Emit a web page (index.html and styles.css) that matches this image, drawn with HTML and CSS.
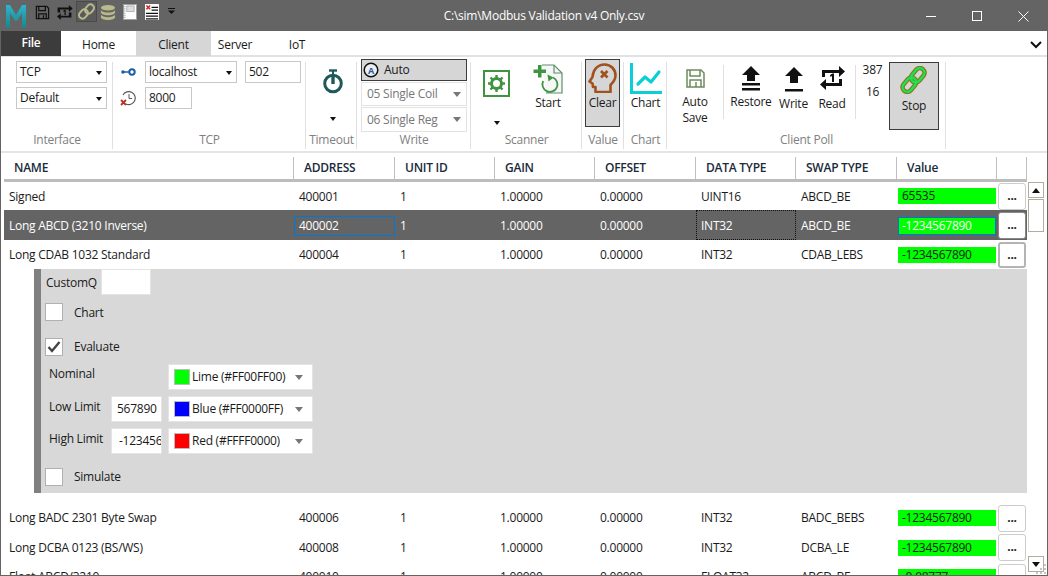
FILE: index.html
```html
<!DOCTYPE html>
<html lang="en">
<head>
<meta charset="utf-8">
<title>Modbus Validation</title>
<link rel="stylesheet" href="styles.css">
</head>
<body>
<div class="window">
  <header class="titlebar">
    <div class="qat">
      <svg class="logo" width="20" height="23" viewBox="0 0 20 23"><defs><linearGradient id="mg" x1="0" y1="0" x2="0" y2="1"><stop offset="0" stop-color="#2cb4cc"/><stop offset="1" stop-color="#1c858e"/></linearGradient></defs><path d="M0 23V0h4l6 10 6-10h4v23h-4V8l-5 8h-2L4 8v15z" fill="url(#mg)"/></svg>
      <svg class="q1" width="15" height="15" viewBox="0 0 16 16" fill="none" stroke="#111" stroke-width="1.300"><path d="M1.500 1.500h11l2 2v11h-13z"/><path d="M4 1.500v4.500h7v-4.500M4 14.500v-5h8v5M9 11v3.500"/></svg>
      <svg class="q2" width="17" height="15" viewBox="0 0 26 24"><path d="M2 12V4h18V0l6 5.500L20 11V7H6v5zM24 12v8H7v4L1 18.500 7 13v4h13v-5z" fill="#111"/><path d="M11 9l2.500-1.500H15V16h-2v-6l-1.500 1z" fill="#111"/></svg>
      <span class="qsel"><svg width="17" height="17" viewBox="0 0 17 17" fill="none" stroke="#b9b98c" stroke-width="2"><rect x="8" y="1" width="7" height="10" rx="3.500" transform="rotate(40 11.500 6)"/><rect x="2" y="6" width="7" height="10" rx="3.500" transform="rotate(40 5.500 11)"/></svg></span>
      <svg class="q3" width="16" height="17" viewBox="0 0 17 17"><ellipse cx="8.500" cy="3.500" rx="7.500" ry="3" fill="#b9b98c"/><path d="M1 6v2.500c0 1.700 3.400 3 7.500 3s7.500-1.300 7.500-3V6c-1 1.700-4 2.500-7.500 2.500S2 7.700 1 6zM1 11v2.500c0 1.700 3.400 3 7.500 3s7.500-1.300 7.500-3V11c-1 1.700-4 2.500-7.500 2.500S2 12.700 1 11z" fill="#b9b98c"/></svg>
      <svg class="q4" width="14" height="16" viewBox="0 0 15 17"><rect width="15" height="17" fill="#fff"/><rect x=".5" y=".5" width="14" height="16" fill="none" stroke="#999"/><path d="M4 2h8v6H4z" fill="#ddd" stroke="#888" stroke-width=".6"/><path d="M2 2v13" stroke="#777" stroke-dasharray="1 1"/></svg>
      <svg class="q5" width="14" height="16" viewBox="0 0 15 17"><rect width="15" height="17" fill="#fff"/><path d="M7 3.500h7M7 6.500h7M1 10h13M1 13h13M1 15.800h13" stroke="#111" stroke-width="1.400"/><path d="M1.500 1.500l4 4M5.500 1.500l-4 4" stroke="#c8281e" stroke-width="1.600"/></svg>
      <svg class="q6" width="9" height="8" viewBox="0 0 9 8"><path d="M1 1h7v1H1zM1 3.500h7L4.500 7z" fill="#111"/></svg>
    </div>
    <div class="doc-title">C:\sim\Modbus Validation v4 Only.csv</div>
    <div class="winbtns">
      <svg width="11" height="11" viewBox="0 0 11 11"><path d="M0 5.500h10" stroke="#fff"/></svg>
      <svg width="11" height="11" viewBox="0 0 11 11"><rect x=".5" y=".5" width="9" height="9" fill="none" stroke="#fff"/></svg>
      <svg width="11" height="11" viewBox="0 0 11 11"><path d="M.5.500l10 10M10.500.500l-10 10" stroke="#fff"/></svg>
    </div>
  </header>

  <nav class="tabs">
    <div class="tab tab-file">File</div>
    <div class="tab">Home</div>
    <div class="tab tab-active">Client</div>
    <div class="tab tab-server">Server</div>
    <div class="tab tab-iot">IoT</div>
    <svg class="chev" width="14" height="9" viewBox="0 0 14 9"><path d="M2 2l5 5 5-5" fill="none" stroke="#111" stroke-width="2"/></svg>
  </nav>

  <section class="ribbon">
    <div class="group g-interface">
      <div class="gbody col-stack">
        <div class="sel w91">TCP<i class="caret"></i></div>
        <div class="sel w91">Default<i class="caret"></i></div>
      </div>
      <div class="glabel">Interface</div>
    </div>
    <div class="group g-tcp">
      <div class="gbody tcp-grid">
        <svg width="16" height="8" viewBox="0 0 16 8"><circle cx="3" cy="4" r="1.800" fill="#1b5fa8"/><path d="M3 4h7" stroke="#1b5fa8" stroke-width="1.500"/><circle cx="12" cy="4" r="2.700" fill="none" stroke="#1b5fa8" stroke-width="2"/></svg>
        <div class="sel w92">localhost<i class="caret"></i></div>
        <div class="inp w56">502</div>
        <svg width="16" height="16" viewBox="0 0 16 16"><path d="M3 5a6.500 6.500 0 1 1 3 9" fill="none" stroke="#555" stroke-width="1.100"/><path d="M9 4v4.500H12" fill="none" stroke="#555"/><path d="M1 10l5 5M6 10l-5 5" stroke="#b83020" stroke-width="1.800"/></svg>
        <div class="inp w47">8000</div>
      </div>
      <div class="glabel">TCP</div>
    </div>
    <div class="group g-timeout">
      <div class="gbody bigbody">
        <svg class="timer" width="20" height="25" viewBox="0 0 20 25" fill="none"><path d="M6 1.500h8" stroke="#1f5a5a" stroke-width="2.400"/><path d="M10 2v3" stroke="#1f5a5a" stroke-width="2"/><circle cx="10" cy="14.500" r="8.300" stroke="#1f5a5a" stroke-width="3"/><path d="M10 6v9" stroke="#1f5a5a" stroke-width="3.400"/></svg>
        <i class="caret caret-big"></i>
      </div>
      <div class="glabel">Timeout</div>
    </div>
    <div class="group g-write">
      <div class="gbody write-stack">
        <div class="auto"><svg width="16" height="16" viewBox="0 0 16 16"><circle cx="8" cy="8" r="6.800" fill="#eee" stroke="#111" stroke-width="1.500"/><text x="8" y="11.500" class="a-glyph">A</text></svg><span>Auto</span></div>
        <div class="wsel">05 Single Coil<i class="caret caret-gray"></i></div>
        <div class="wsel">06 Single Reg<i class="caret caret-gray"></i></div>
      </div>
      <div class="glabel">Write</div>
    </div>
    <div class="group g-scanner">
      <div class="gbody scanner-body">
        <div class="gearcol">
          <svg width="27" height="27" viewBox="0 0 27 27"><rect width="27" height="27" fill="#f0f0f0"/><rect x="1" y="1" width="25" height="25" fill="#fff" stroke="#3f9440" stroke-width="2"/><circle cx="13.500" cy="13.500" r="5" fill="none" stroke="#3f9440" stroke-width="3"/><path d="M13.500 5v17M5 13.500h17M7.500 7.500l12 12M19.500 7.500l-12 12" stroke="#3f9440" stroke-width="2.400" stroke-dasharray="3 11"/></svg>
          <i class="caret caret-big"></i>
        </div>
        <div class="startcol">
          <svg width="30" height="30" viewBox="0 0 30 30" fill="none"><path d="M9 1h12l8 8v20H13" fill="#f6f6f6" stroke="#5f8f6a" stroke-width="1.200"/><path d="M21 1v8h8" stroke="#5f8f6a" stroke-width="1.200"/><path d="M5 1h3.500v4.500H13V9H8.500v4.500H5V9H.500V5.500H5z" fill="#3f9440"/><path d="M20 13.500a7.500 7.500 0 1 1-9.800 3.500" stroke="#3f9440" stroke-width="1.800"/><path d="M14.500 10.500l6 3-5 4z" fill="#3f9440"/></svg>
          <span>Start</span>
        </div>
      </div>
      <div class="glabel">Scanner</div>
    </div>
    <div class="group g-value">
      <div class="gbody clearbody">
        <div class="clearbtn">
          <svg width="29" height="30" viewBox="0 0 29 30" fill="none"><path d="M7.500 29v-5H5l-.5-3.500-3-2L4.500 14C5 6.500 10 1.500 16.500 1.500 23 1.500 27.500 6.500 27.500 12.500c0 4-2.500 7-5 9.500v7z" stroke="#a0521e" stroke-width="2.600" stroke-linejoin="round"/><path d="M13 8l6.500 6.500M19.500 8L13 14.500" stroke="#a0521e" stroke-width="2.800"/></svg>
          <span>Clear</span>
        </div>
      </div>
      <div class="glabel">Value</div>
    </div>
    <div class="group g-chart">
      <div class="gbody chartbody">
        <svg width="32" height="31" viewBox="0 0 32 31" fill="none"><path d="M1.500 0v29.500H32" stroke="#0ccfd6" stroke-width="3"/><path d="M8 21l7-7 6 5 8-10" stroke="#0ccfd6" stroke-width="3.200" stroke-linecap="round" stroke-linejoin="round"/></svg>
        <span>Chart</span>
      </div>
      <div class="glabel">Chart</div>
    </div>
    <div class="group g-poll">
      <div class="gbody pollbody">
        <div class="autosave">
          <svg width="19" height="19" viewBox="0 0 19 19" fill="none" stroke="#6f8a5c" stroke-width="1.500"><path d="M1 1h14l3 3v14H1z"/><path d="M4 1v6h10V1M4 18v-7h11v7M10 13v5"/></svg>
          <span>Auto<br>Save</span>
        </div>
        <div class="pollbtn restore">
          <svg width="20" height="27" viewBox="0 0 20 27"><path d="M10 1l9 9h-5v6H6v-6H1z" fill="#111"/><path d="M1 18h18v2.500H1zM1 23h18v2.500H1z" fill="#111"/></svg>
          <span>Restore</span>
        </div>
        <div class="pollbtn write">
          <svg width="20" height="27" viewBox="0 0 20 27"><path d="M10 2l9 9h-5v7H6v-7H1z" fill="#111"/><path d="M1 24h18v2.500H1z" fill="#111"/></svg>
          <span>Write</span>
        </div>
        <div class="pollbtn read">
          <svg width="26" height="27" viewBox="0 0 26 27"><path d="M3 12V5h17V1l6 5.500-6 5.500V8H6v4zM23 14v7H7v4l-6-5.500L7 14v4h13v-4z" fill="#111"/><path d="M11 10l2.500-1.500H15V17h-2v-6l-1.500 1z" fill="#111"/></svg>
          <span>Read</span>
        </div>
        <div class="counts"><span>387</span><span>16</span></div>
        <div class="stopbtn">
          <svg width="28" height="28" viewBox="0 0 30 30" fill="none"><g stroke="#8a7a14" stroke-width="5"><rect x="14" y="1.500" width="10" height="17" rx="5" transform="rotate(40 19 10)"/><rect x="5" y="11.500" width="10" height="17" rx="5" transform="rotate(40 10 20)"/></g><g stroke="#14e65a" stroke-width="2.400"><rect x="14" y="1.500" width="10" height="17" rx="5" transform="rotate(40 19 10)"/><rect x="5" y="11.500" width="10" height="17" rx="5" transform="rotate(40 10 20)"/></g></svg>
          <span>Stop</span>
        </div>
      </div>
      <div class="glabel">Client Poll</div>
    </div>
  </section>

  <main class="main">
    <div class="table">
      <div class="thead cols">
        <div>NAME</div><div>ADDRESS</div><div>UNIT ID</div><div>GAIN</div><div>OFFSET</div><div>DATA TYPE</div><div>SWAP TYPE</div><div>Value</div><div></div>
      </div>
      <div class="row cols h28 nudge">
        <div>Signed</div><div>400001</div><div>1</div><div>1.00000</div><div>0.00000</div><div>UINT16</div><div>ABCD_BE</div><div class="val">65535</div><div class="dots">...</div>
      </div>
      <div class="row cols h30 selected nudge">
        <div>Long ABCD (3210 Inverse)</div><div class="focus-blue">400002</div><div>1</div><div>1.00000</div><div>0.00000</div><div class="focus-dot">INT32</div><div>ABCD_BE</div><div class="val val-sel">-1234567890</div><div class="dots">...</div>
      </div>
      <div class="row cols h29">
        <div>Long CDAB 1032 Standard</div><div>400004</div><div>1</div><div>1.00000</div><div>0.00000</div><div>INT32</div><div>CDAB_LEBS</div><div class="val">-1234567890</div><div class="dots dots-open">...</div>
      </div>
      <div class="detail">
        <div class="customq"><span>CustomQ</span><div class="inp-plain"></div></div>
        <div class="check chk-chart"><i class="box"></i><span>Chart</span></div>
        <div class="check chk-eval"><i class="box"><svg width="14" height="12" viewBox="0 0 14 12"><path d="M1.500 6l3.500 4 7.500-9" fill="none" stroke="#444" stroke-width="2.400"/></svg></i><span>Evaluate</span></div>
        <div class="limits">
          <span class="lim-nominal">Nominal</span><span></span>
          <div class="combo"><i class="swatch lime"></i><span>Lime (#FF00FF00)</span><i class="caret caret-gray"></i></div>
          <span>Low Limit</span><div class="limit-inp">567890</div>
          <div class="combo"><i class="swatch blue"></i><span>Blue (#FF0000FF)</span><i class="caret caret-gray"></i></div>
          <span>High Limit</span><div class="limit-inp clip"><b>-1234567890</b></div>
          <div class="combo"><i class="swatch red"></i><span>Red (#FFFF0000)</span><i class="caret caret-gray"></i></div>
        </div>
        <div class="check chk-sim"><i class="box"></i><span>Simulate</span></div>
      </div>
      <div class="row cols h30 after">
        <div>Long BADC 2301 Byte Swap</div><div>400006</div><div>1</div><div>1.00000</div><div>0.00000</div><div>INT32</div><div>BADC_BEBS</div><div class="val">-1234567890</div><div class="dots">...</div>
      </div>
      <div class="row cols h29">
        <div>Long DCBA 0123 (BS/WS)</div><div>400008</div><div>1</div><div>1.00000</div><div>0.00000</div><div>INT32</div><div>DCBA_LE</div><div class="val">-1234567890</div><div class="dots">...</div>
      </div>
      <div class="row cols h30">
        <div>Float ABCD/3210</div><div>400010</div><div>1</div><div>1.00000</div><div>0.00000</div><div>FLOAT32</div><div>ABCD_BE</div><div class="val">-0.98777</div><div class="dots">...</div>
      </div>
    </div>
    <aside class="scrollbar">
      <div class="sb-btn"><i class="tri-up"></i></div>
      <div class="sb-thumb"></div>
      <div class="sb-track"></div>
      <div class="sb-btn"><i class="tri-down"></i></div>
    </aside>
  </main>
  <svg class="grip" width="11" height="11" viewBox="0 0 11 11" fill="#c4c4c4"><path d="M8 0h2v2H8zM4 4h2v2H4zM8 4h2v2H8zM0 8h2v2H0zM4 8h2v2H4zM8 8h2v2H8z"/></svg>
</div>
</body>
</html>
```
FILE: styles.css
```css
* { box-sizing: border-box; }
html, body { margin: 0; height: 100%; overflow: hidden; }
body { font: 12px/16px "Open Sans", "Noto Sans", sans-serif; color: #1a1a1a; background: #fff; letter-spacing: -0.25px; }
i { display: block; font-style: normal; }
svg { display: block; flex: none; }

.window { width: 1048px; height: 576px; border: solid #646464; border-width: 0 1px 1px; overflow: hidden; display: flex; flex-direction: column; position: relative; }
.grip { position: absolute; right: 0; bottom: 0; }

/* title bar */
.titlebar { height: 31px; flex: none; background: #646464; color: #fff; display: grid; grid-template-columns: 1fr 1fr; position: relative; }
.qat { display: flex; align-items: flex-start; padding: 5px 0 0 5px; }
.q1 { margin: 0 0 0 9px; }
.q2 { margin: 0 0 0 6px; }
.qsel { width: 21px; height: 21px; margin: -4px 0 0 3px; background: #5a5a5a; border: 1px solid #4a4a4a; display: flex; align-items: center; justify-content: center; }
.q3 { margin: -1px 0 0 3px; }
.q4 { margin: -1px 0 0 7px; }
.q5 { margin: -1px 0 0 8px; }
.q6 { margin: 2px 0 0 8px; }
.doc-title { position: absolute; left: 40px; right: 0; top: 8px; text-align: center; }
.winbtns { grid-column: 2; display: flex; justify-content: flex-end; gap: 35px; padding: 11px 18px 0 0; }

/* tabs */
.tabs { height: 26px; flex: none; display: flex; border-bottom: 2px solid #e2e2e2; position: relative; }
.tab { width: 75px; height: 25px; text-align: center; line-height: 27px; }
.tab-file { width: 60px; background: #3c3c3c; color: #fff; font-weight: 600; line-height: 24px; }
.tab-active { background: #d6d6d6; }
.tab-server { width: 48px; }
.tab-iot { margin-left: 26px; width: 24px; }
.chev { position: absolute; right: 4px; top: 9px; }

/* ribbon */
.ribbon { height: 96px; flex: none; display: flex; border-bottom: 2px solid #e4e4e4; }
.group { display: flex; flex-direction: column; height: 94px; position: relative; }
.group::after { content: ""; position: absolute; right: 0; top: 5px; bottom: 2px; width: 1px; background: #e0e0e0; }
.gbody { flex: 1; min-height: 0; }
.glabel { height: 17px; text-align: center; color: #808080; line-height: 16px; margin-bottom: 2px; }
.g-interface { width: 112px; }
.g-tcp { width: 193px; }
.g-timeout { width: 51px; }
.g-write { width: 114px; }
.g-scanner { width: 111px; }
.g-value { width: 42px; }
.g-chart { width: 43px; }
.g-poll { width: 279px; }

.sel, .inp { height: 22px; border: 1px solid #c8c8c8; line-height: 19px; padding-left: 3px; position: relative; background: #fff; }
.w91 { width: 91px; }
.w92 { width: 92px; }
.w56 { width: 56px; }
.w47 { width: 47px; }
.caret { width: 0; height: 0; border: 3px solid transparent; border-top: 4px solid #111; border-bottom: 0; }
.sel .caret { position: absolute; right: 4px; top: 9px; }
.caret-big { border-width: 4px 3.500px 0; }
.caret-gray { border-width: 5px 4px 0; border-top-color: #777; }

.col-stack { display: flex; flex-direction: column; gap: 4px; padding: 4px 0 0 15px; }
.tcp-grid { display: grid; grid-template-columns: 16px 92px 56px; grid-auto-rows: 22px; column-gap: 8px; row-gap: 4px; padding: 4px 0 0 7px; align-items: center; align-content: start; justify-items: start; }
.tcp-grid .w56 { margin-left: 1px; }
.tcp-grid .w92, .tcp-grid .w47 { margin-left: 1px; }
.bigbody { display: flex; flex-direction: column; align-items: center; padding: 12px 0 0 2px; }
.timer { margin-bottom: 23px; }

.write-stack { padding: 2px 0 0 4px; display: flex; flex-direction: column; gap: 1px; }
.auto { width: 106px; height: 22px; background: #d6d6d6; border: 1px solid #3c3c3c; display: flex; align-items: center; gap: 5px; padding-left: 1px; }
.a-glyph { font: bold 9px "Open Sans", sans-serif; fill: #1b5fa8; text-anchor: middle; }
.wsel { width: 106px; height: 25px; border: 1px solid #e2e2e2; color: #777; display: flex; align-items: center; justify-content: space-between; padding: 0 5px 0 5px; }

.scanner-body { display: flex; padding: 7px 0 0 12px; }
.gearcol { width: 27px; display: flex; flex-direction: column; align-items: center; padding-top: 6px; }
.gearcol .caret { margin-top: 24px; }
.startcol { margin-left: 19px; display: flex; flex-direction: column; align-items: center; width: 38px; }
.startcol span { margin-top: 1px; }

.clearbody { padding: 2px 0 0 3px; }
.clearbtn { width: 35px; height: 68px; background: #d6d6d6; border: 1px solid #3c3c3c; display: flex; flex-direction: column; align-items: center; padding-top: 3px; }
.clearbtn span { margin-top: 2px; }
.chartbody { display: flex; flex-direction: column; align-items: center; padding: 6px 0 0 0; }
.chartbody span { margin-top: 1px; }

.pollbody { display: flex; align-items: flex-start; }
.autosave { width: 57px; border-right: 1px solid #e0e0e0; margin-top: 8px; display: flex; flex-direction: column; align-items: center; padding: 4px 0 0; height: 54px; }
.autosave span { text-align: center; line-height: 16px; margin-top: 6px; }
.pollbtn { display: flex; flex-direction: column; align-items: center; margin-top: 8px; }
.pollbtn span { margin-top: 4px; }
.restore { width: 54px; }
.restore span { margin-top: 2px; }
.write { width: 31px; }
.read { width: 46px; }
.counts { width: 35px; margin-top: 8px; height: 54px; border-left: 1px solid #e0e0e0; display: flex; flex-direction: column; align-items: center; gap: 6px; padding-right: 1px; }
.counts span:first-child { margin-top: -3px; }
.stopbtn { width: 50px; height: 68px; margin: 5px 0 0 -1px; background: #d6d6d6; border: 1px solid #3c3c3c; display: flex; flex-direction: column; align-items: center; padding-top: 3px; }
.stopbtn span { margin-top: 4px; }

/* table */
.main { flex: 1; min-height: 0; display: flex; padding: 4px 0 0 3px; overflow: hidden; }
.table { width: 1023px; flex: none; }
.cols { display: grid; grid-template-columns: 290px 101px 100px 100px 101px 100px 101px 100px 30px; }
.thead { height: 25px; border-bottom: 3px solid #bdbdbd; font-weight: 600; color: #1a2a3a; }
.thead > div { padding: 3px 0 0 10px; border-right: 1px solid #c0c0c0; }
.row { align-items: center; }
.row > div { padding-left: 5px; }
.nudge > div:not(.val):not(.dots):not(.focus-dot):not(.focus-blue) { padding-top: 2px; }
.h28 { height: 28px; }
.h29 { height: 29px; }
.h30 { height: 30px; }
.after { margin-top: 10px; }
.selected { background: #646464; color: #fff; }
.focus-blue { height: 20px; border: 1px solid #0078d7; line-height: 18px; margin-top: 1px; padding-left: 4px !important; }
.focus-dot { height: 30px; border: 1px dotted #111; line-height: 29px; padding-left: 4px !important; }
.row > .val { height: 16px; width: 98px; margin-left: 1px; padding-left: 4px; background: #00ff00; line-height: 16px; }
.row > .val-sel { height: 18px; margin-top: 1px; line-height: 18px; outline: 1px solid #0078d7; outline-offset: -1px; color: #fff; }
.row > .dots { width: 28px; height: 27px; margin-left: 1px; padding: 0; background: #fff; border: 1px solid #ccc; border-radius: 3px; text-align: center; font-weight: 700; line-height: 24px; color: #222; }
.row > .dots-open { border: 2px solid #b4b4b4; height: 26px; line-height: 22px; }
.selected > .dots { border-color: #888; }

.detail { height: 224px; margin-left: 30px; width: 993px; background: #d8d8d8; border-left: 7px solid #808080; display: flex; flex-direction: column; padding-left: 4px; }
.customq { display: flex; align-items: center; height: 26px; padding-left: 1px; }
.customq span { padding-top: 2px; }
.inp-plain { width: 50px; height: 26px; margin-left: 4px; background: #fff; border: 1px solid #e4e4e4; }
.check { display: flex; align-items: center; height: 18px; }
.box { width: 18px; height: 18px; background: #fff; border: 1px solid #b0b0b0; display: flex; align-items: center; justify-content: center; margin-right: 11px; }
.chk-chart { margin-top: 8px; }
.chk-chart span { padding-top: 2px; }
.chk-eval { margin-top: 17px; }
.chk-sim { margin-top: 14px; }
.limits { display: grid; grid-template-columns: 62px 51px 151px; row-gap: 6px; grid-auto-rows: 26px; margin: 8px 0 0 4px; }
.limits > span { padding-top: 1px; line-height: 20px; }
.limits > .lim-nominal { padding-top: 0; }
.limits .combo { margin-left: 6px; width: 145px; }
.limit-inp { width: 51px; height: 26px; background: #fff; border: 1px solid #e4e4e4; line-height: 24px; padding-left: 5px; overflow: hidden; white-space: nowrap; }
.limit-inp b { font-weight: 400; }
.clip { padding: 0 3px 0 7px; }
.combo { height: 26px; background: #fff; border: 1px solid #e4e4e4; display: flex; align-items: center; padding: 0 9px 0 5px; }
.combo span { flex: 1; margin-left: 2px; }
.swatch { width: 16px; height: 16px; border: 1px solid #bbb; }
.lime { background: #00ff00; }
.blue { background: #0000ff; }
.red { background: #ff0000; }

/* scrollbar */
.scrollbar { width: 16px; margin: 25px 0 0 1px; display: flex; flex-direction: column; height: 390px; }
.sb-btn { width: 16px; height: 16px; flex: none; border: 1px solid #b4ad9f; display: flex; align-items: center; justify-content: center; }
.sb-thumb { height: 33px; border: 1px solid #b4ad9f; margin-top: 1px; flex: none; }
.sb-track { flex: 1; }
.tri-up { border: 4px solid transparent; border-bottom: 5px solid #111; border-top: 0; }
.tri-down { border: 4px solid transparent; border-top: 5px solid #111; border-bottom: 0; }
```
